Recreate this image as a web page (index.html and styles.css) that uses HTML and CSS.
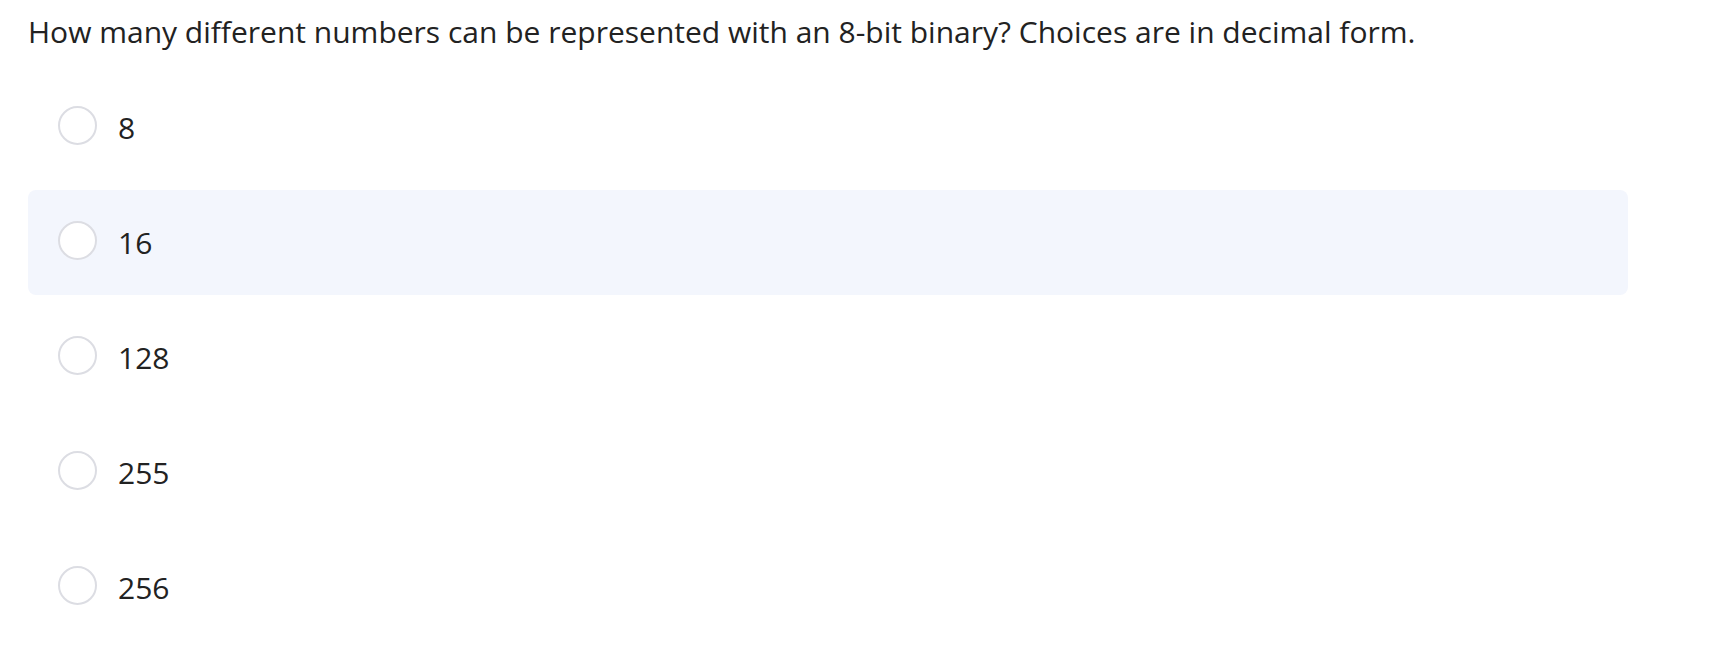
FILE: index.html
```html
<!DOCTYPE html>
<html lang="en">
<head>
<meta charset="utf-8">
<title>Quiz</title>
<link rel="stylesheet" href="styles.css">
</head>
<body>
<div class="quiz">
  <p class="question">How many different numbers can be represented with an 8-bit binary? Choices are in decimal form.</p>
  <div class="options">
    <label class="option"><span class="radio"></span><span class="label">8</span></label>
    <label class="option hover"><span class="radio"></span><span class="label">16</span></label>
    <label class="option"><span class="radio"></span><span class="label">128</span></label>
    <label class="option"><span class="radio"></span><span class="label">255</span></label>
    <label class="option"><span class="radio"></span><span class="label">256</span></label>
  </div>
</div>
</body>
</html>
```
FILE: styles.css
```css
html, body {
  margin: 0;
  padding: 0;
  background: #ffffff;
}
body {
  font-family: "Open Sans", "Noto Sans", sans-serif;
  color: #1f1f1f;
}
.quiz {
  padding: 12px 0 0 28px;
  width: 1600px;
}
.question {
  margin: 0;
  font-size: 30px;
  line-height: 40px;
  color: #222222;
}
.options {
  display: flex;
  flex-direction: column;
  gap: 10px;
  margin-top: 23px;
}
.option {
  display: flex;
  align-items: center;
  height: 105px;
  box-sizing: border-box;
  padding-left: 30px;
  border-radius: 8px;
}
.option.hover {
  background: #f3f6fd;
}
.radio {
  width: 39px;
  height: 39px;
  box-sizing: border-box;
  border: 2px solid #dcdde3;
  border-radius: 50%;
  background: #ffffff;
  flex: none;
  margin-top: -4px;
}
.label {
  margin-left: 21px;
  font-size: 30px;
  line-height: 40px;
  color: #222222;
}
```
